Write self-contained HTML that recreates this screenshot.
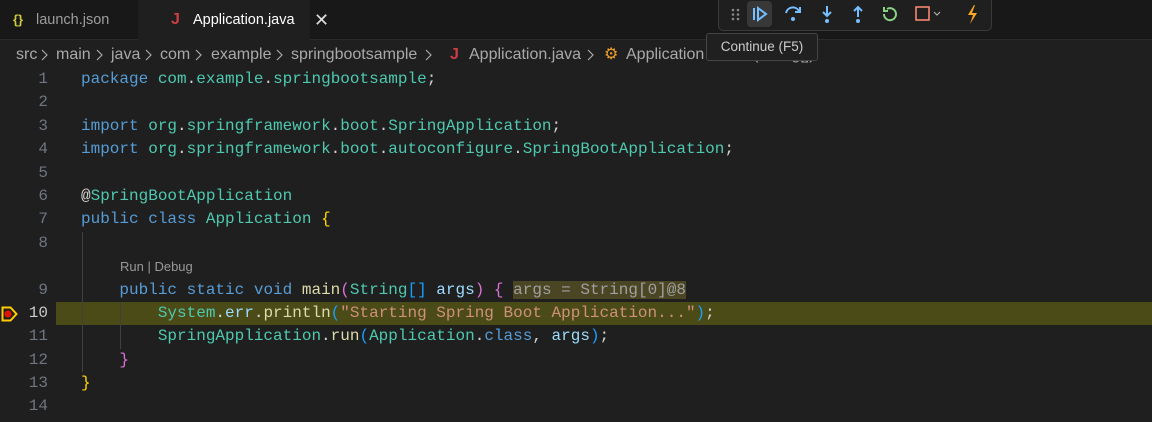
<!DOCTYPE html>
<html><head><meta charset="utf-8"><style>
body{margin:0;width:1152px;height:422px;background:#1f1f1f;overflow:hidden;position:relative;font-family:"Liberation Sans",sans-serif}
.tabs{position:absolute;left:0;top:0;width:1152px;height:40px;background:#181818;border-bottom:1px solid #2b2b2b;box-sizing:border-box}
.tab{position:absolute;top:0;height:40px;line-height:40px;font-size:14.5px}
.t1{left:0;width:138px;color:#9d9d9d;border-right:1px solid #2b2b2b}
.t2{left:138px;width:172px;background:#1f1f1f;color:#fff;height:41px}
.bc{position:absolute;top:42px;font-size:16px;color:#a9a9a9;line-height:26px;white-space:nowrap}
.ch{position:absolute;top:49px}
.code{position:absolute;left:0;top:68px;width:1152px;font-family:"Liberation Mono",monospace;font-size:16px}
.ln{height:23.4px;line-height:23.4px;position:relative;white-space:pre;color:#d4d4d4}
.num{position:absolute;left:0;width:48px;text-align:right;color:#6e7681}
.tx{position:absolute;left:81px}
.k{color:#569cd6}.t{color:#4ec9b0}.y{color:#ffd700}.p{color:#da70d6}.b{color:#179fff}.v{color:#9cdcfe}.f{color:#dcdcaa}.s2{color:#ce9178}
.lens{font-family:"Liberation Sans",sans-serif;font-size:13px;color:#999}
.guide{position:absolute;width:1px;background:#404040}
</style></head><body>
<div class="tabs">
 <div class="tab t1"><span style="position:absolute;left:13px;color:#cbcb41;font-weight:bold;font-size:13px">{}</span><span style="position:absolute;left:36px">launch.json</span></div>
 <div class="tab t2"><span style="position:absolute;left:33px;color:#cc3e44;font-weight:bold;font-size:16px">J</span><span style="position:absolute;left:55px">Application.java</span><span style="position:absolute;left:176px;font-size:18px;color:#ddd">✕</span></div>
</div>
<div class="bc" style="left:16px">src</div>
<div class="bc" style="left:56px">main</div>
<div class="bc" style="left:111px">java</div>
<div class="bc" style="left:160px">com</div>
<div class="bc" style="left:211px">example</div>
<div class="bc" style="left:291px">springbootsample</div>
<svg style="position:absolute;left:0;top:48px" width="600" height="14"><g stroke="#a9a9a9" stroke-width="1.2" fill="none"><path d="M42 2l5 5-5 5"/><path d="M97 2l5 5-5 5"/><path d="M146 2l5 5-5 5"/><path d="M196 2l5 5-5 5"/><path d="M277 2l5 5-5 5"/><path d="M426 2l5 5-5 5"/><path d="M588 2l5 5-5 5"/></g></svg>
<div class="bc" style="left:450px;color:#cc3e44;font-weight:bold">J</div>
<div class="bc" style="left:469px">Application.java</div>
<div class="bc" style="left:604px;color:#ee9d28">⚙</div>
<div class="bc" style="left:626px">Application › main(String[])</div>

<div style="position:absolute;left:718px;top:0;width:274px;height:31px;background:#1f1f1f;border:1px solid #3a3a3a;border-top:none;border-radius:0 0 5px 5px;box-sizing:border-box"></div>
<svg style="position:absolute;left:718px;top:0" width="274" height="31" viewBox="0 0 274 31">
 <g fill="#888"><circle cx="15" cy="10" r="1.3"/><circle cx="20" cy="10" r="1.3"/><circle cx="15" cy="14.5" r="1.3"/><circle cx="20" cy="14.5" r="1.3"/><circle cx="15" cy="19" r="1.3"/><circle cx="20" cy="19" r="1.3"/></g>
 <rect x="29" y="1" width="25" height="26" rx="4" fill="#383838"/>
 <g stroke="#75beff" stroke-width="2" fill="none"><path d="M36 8v12"/><path d="M40 8l8 6-8 6z"/></g>
 <path d="M68 13a7 7 0 0 1 13 -2" stroke="#75beff" stroke-width="2" fill="none"/><path d="M82 7v5h-5" stroke="#75beff" stroke-width="2" fill="none"/><circle cx="75" cy="19" r="2" fill="#75beff"/>
 <path d="M109 6v10M105 12l4 4 4-4" stroke="#75beff" stroke-width="2" fill="none"/><circle cx="109" cy="21" r="2" fill="#75beff"/>
 <path d="M140 17v-10M136 11l4-4 4 4" stroke="#75beff" stroke-width="2" fill="none"/><circle cx="140" cy="21" r="2" fill="#75beff"/>
 <path d="M169 9a6 6 0 1 1 -3 5" stroke="#89d185" stroke-width="2" fill="none"/><path d="M166 7v4h4" stroke="#89d185" stroke-width="2" fill="none"/>
 <rect x="198" y="7" width="13" height="13" stroke="#f48771" stroke-width="1.6" fill="none"/>
 <path d="M216 12l3 3 3-3" stroke="#aaa" stroke-width="1.2" fill="none"/>
 <path d="M256 5l-6 10h5l-3 9 7-11h-5l3-8z" fill="#f9a825"/>
</svg>
<div style="position:absolute;left:706px;top:33px;width:112px;height:28px;background:#202020;border:1px solid #454545;border-radius:3px;box-sizing:border-box;color:#ccc;font-size:13.5px;line-height:26px;text-align:center">Continue (F5)</div>

<div class="code">
 <div style="position:absolute;left:56px;top:234px;width:1096px;height:23.4px;background:#4b4b18"></div>
 <div class="guide" style="left:82px;top:164px;height:140px"></div>
 <div class="guide" style="left:120px;top:234px;height:47px"></div>
 <div class="ln"><span class="num">1</span><span class="tx"><span class="k">package</span> <span class="t">com</span>.<span class="t">example</span>.<span class="t">springbootsample</span>;</span></div>
 <div class="ln"><span class="num">2</span></div>
 <div class="ln"><span class="num">3</span><span class="tx"><span class="k">import</span> <span class="t">org</span>.<span class="t">springframework</span>.<span class="t">boot</span>.<span class="t">SpringApplication</span>;</span></div>
 <div class="ln"><span class="num">4</span><span class="tx"><span class="k">import</span> <span class="t">org</span>.<span class="t">springframework</span>.<span class="t">boot</span>.<span class="t">autoconfigure</span>.<span class="t">SpringBootApplication</span>;</span></div>
 <div class="ln"><span class="num">5</span></div>
 <div class="ln"><span class="num">6</span><span class="tx">@<span class="t">SpringBootApplication</span></span></div>
 <div class="ln"><span class="num">7</span><span class="tx"><span class="k">public</span> <span class="k">class</span> <span class="t">Application</span> <span class="y">{</span></span></div>
 <div class="ln"><span class="num">8</span></div>
 <div class="ln"><span class="tx lens" style="left:120px">Run | Debug</span></div>
 <div class="ln"><span class="num">9</span><span class="tx">    <span class="k">public</span> <span class="k">static</span> <span class="k">void</span> <span class="f">main</span><span class="p">(</span><span class="t">String</span><span class="b">[]</span> <span class="v">args</span><span class="p">)</span> <span class="p">{</span> <span style="background:#4a4523;color:#a0a0a0">args = String[0]@8</span></span></div>
 <div class="ln"><span class="num" style="color:#ccc">10</span><svg style="position:absolute;left:1px;top:4px" width="18" height="16"><path d="M1.5 1.5h8l6 6.5-6 6.5h-8z" fill="none" stroke="#ffcc00" stroke-width="2"/><circle cx="7" cy="8" r="3.5" fill="#e51400"/></svg><span class="tx">        <span class="t">System</span>.<span class="v">err</span>.<span class="f">println</span><span class="b">(</span><span class="s2">"Starting Spring Boot Application..."</span><span class="b">)</span>;</span></div>
 <div class="ln"><span class="num">11</span><span class="tx">        <span class="t">SpringApplication</span>.<span class="f">run</span><span class="b">(</span><span class="t">Application</span>.<span class="k">class</span>, <span class="v">args</span><span class="b">)</span>;</span></div>
 <div class="ln"><span class="num">12</span><span class="tx">    <span class="p">}</span></span></div>
 <div class="ln"><span class="num">13</span><span class="tx"><span class="y">}</span></span></div>
 <div class="ln"><span class="num">14</span></div>
</div>
</body></html>
